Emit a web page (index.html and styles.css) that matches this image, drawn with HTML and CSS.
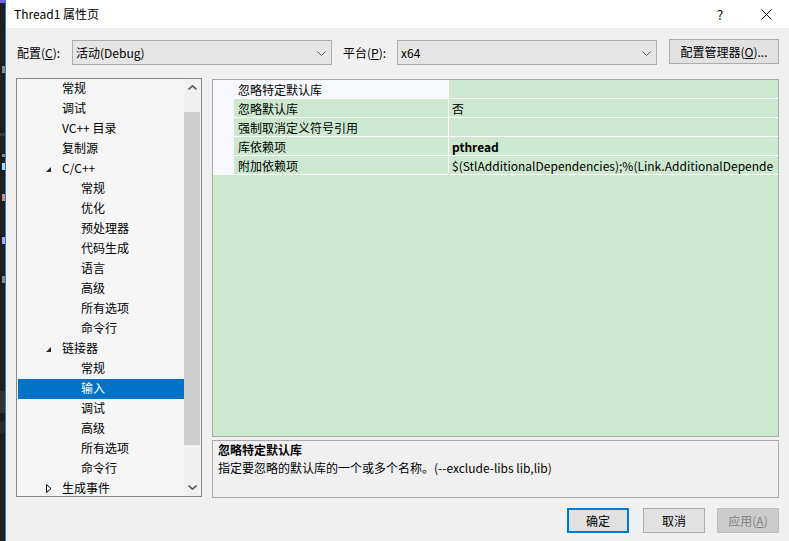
FILE: index.html
```html
<!DOCTYPE html>
<html lang="zh-CN">
<head>
    <meta charset="UTF-8">
    <meta name="viewport" content="width=device-width, initial-scale=1.0">
    <title>Thread1 属性页</title>
    <link rel="stylesheet" href="styles.css">
</head>
<body>

    <div class="screen">
        <!-- Editor window peeking out behind the dialog -->
        <div class="editor-edge">
            <div class="accent"></div>
            <div class="gap" style="height: 63px"></div>
            <div class="mark grey"></div>
            <div class="gap" style="height: 60px"></div>
            <div class="band"></div>
            <div class="gap" style="height: 18px"></div>
            <div class="mark grey short"></div>
            <div class="gap" style="height: 6px"></div>
            <div class="mark blue"></div>
            <div class="gap" style="height: 24px"></div>
            <div class="mark orange"></div>
            <div class="gap" style="height: 36px"></div>
            <div class="mark purple"></div>
            <div class="gap" style="height: 32px"></div>
            <div class="mark grey"></div>
            <div class="gap" style="height: 108px"></div>
            <div class="band tall"></div>
            <div class="gap" style="height: 8px"></div>
            <div class="band thin"></div>
        </div>

        <div class="dialog">
            <div class="titlebar">
                <span class="title">Thread1 属性页</span>
                <span class="help">?</span>
                <span class="close">
                    <svg width="11" height="11" viewBox="0 0 11 11">
                        <path d="M0.5 0.5 L10.5 10.5 M10.5 0.5 L0.5 10.5" stroke="#000" stroke-width="1" fill="none"/>
                    </svg>
                </span>
            </div>

            <div class="content">
                <!-- Configuration / platform selectors -->
                <div class="config-row">
                    <span class="field-label">配置(<u>C</u>):</span>
                    <div class="combo">
                        <span>活动(Debug)</span>
                        <svg class="chevron" width="9" height="5" viewBox="0 0 9 5">
                            <path d="M0.5 0.5 L4.5 4.5 L8.5 0.5" stroke="#555" fill="none"/>
                        </svg>
                    </div>
                    <span class="field-label platform">平台(<u>P</u>):</span>
                    <div class="combo">
                        <span>x64</span>
                        <svg class="chevron" width="9" height="5" viewBox="0 0 9 5">
                            <path d="M0.5 0.5 L4.5 4.5 L8.5 0.5" stroke="#555" fill="none"/>
                        </svg>
                    </div>
                    <button class="btn manager">配置管理器(<u>O</u>)...</button>
                </div>

                <div class="main">
                    <!-- Property page tree -->
                    <div class="tree">
                        <ul class="tree-list">
                            <li class="lvl0">常规</li>
                            <li class="lvl0">调试</li>
                            <li class="lvl0">VC++ 目录</li>
                            <li class="lvl0">复制源</li>
                            <li class="lvl0"><span class="twisty open"></span>C/C++</li>
                            <li class="lvl1">常规</li>
                            <li class="lvl1">优化</li>
                            <li class="lvl1">预处理器</li>
                            <li class="lvl1">代码生成</li>
                            <li class="lvl1">语言</li>
                            <li class="lvl1">高级</li>
                            <li class="lvl1">所有选项</li>
                            <li class="lvl1">命令行</li>
                            <li class="lvl0"><span class="twisty open"></span>链接器</li>
                            <li class="lvl1">常规</li>
                            <li class="lvl1 selected">输入</li>
                            <li class="lvl1">调试</li>
                            <li class="lvl1">高级</li>
                            <li class="lvl1">所有选项</li>
                            <li class="lvl1">命令行</li>
                            <li class="lvl0">
                                <span class="twisty closed">
                                    <svg width="6" height="9" viewBox="0 0 6 9">
                                        <path d="M0.5 0.5 L5 4.5 L0.5 8.5 Z" stroke="#000" fill="none"/>
                                    </svg>
                                </span>生成事件
                            </li>
                        </ul>
                        <div class="scrollbar">
                            <div class="sb-arrow">
                                <svg width="9" height="5" viewBox="0 0 9 5">
                                    <path d="M0.5 4.5 L4.5 0.8 L8.5 4.5" stroke="#606060" stroke-width="1.6" fill="none"/>
                                </svg>
                            </div>
                            <div class="sb-track">
                                <div class="sb-thumb"></div>
                            </div>
                            <div class="sb-arrow">
                                <svg width="9" height="5" viewBox="0 0 9 5">
                                    <path d="M0.5 0.5 L4.5 4.2 L8.5 0.5" stroke="#606060" stroke-width="1.6" fill="none"/>
                                </svg>
                            </div>
                        </div>
                    </div>

                    <div class="right">
                        <!-- Property grid -->
                        <div class="grid">
                            <div class="prop active">
                                <div class="prop-name">忽略特定默认库</div>
                                <div class="prop-value"></div>
                            </div>
                            <div class="prop">
                                <div class="prop-name">忽略默认库</div>
                                <div class="prop-value">否</div>
                            </div>
                            <div class="prop">
                                <div class="prop-name">强制取消定义符号引用</div>
                                <div class="prop-value"></div>
                            </div>
                            <div class="prop">
                                <div class="prop-name">库依赖项</div>
                                <div class="prop-value bold">pthread</div>
                            </div>
                            <div class="prop">
                                <div class="prop-name">附加依赖项</div>
                                <div class="prop-value">$(StlAdditionalDependencies);%(Link.AdditionalDepende</div>
                            </div>
                        </div>

                        <!-- Description of the selected property -->
                        <div class="desc">
                            <div class="desc-title">忽略特定默认库</div>
                            <div class="desc-text">指定要忽略的默认库的一个或多个名称。(--exclude-libs lib,lib)</div>
                        </div>
                    </div>
                </div>

                <div class="buttons">
                    <button class="btn default">确定</button>
                    <button class="btn">取消</button>
                    <button class="btn disabled">应用(<u>A</u>)</button>
                </div>
            </div>
        </div>
    </div>

</body>
</html>
```

FILE: styles.css
```css
/* General Styles */
body {
    margin: 0;
    padding: 0;
    font-family: "Segoe UI", "Noto Sans CJK SC", sans-serif;
    font-size: 12px;
    color: #000;
    background-color: #1e1e1e;
    overflow: hidden;
}

.screen {
    display: flex;
    width: 789px;
    height: 541px;
}

/* Editor strip on the left */
.editor-edge {
    width: 5px;
    flex-shrink: 0;
    background-color: #1e1e1e;
    overflow: hidden;
    display: flex;
    flex-direction: column;
    align-items: flex-end;
}

.editor-edge .gap {
    width: 5px;
}

.editor-edge .accent {
    width: 5px;
    height: 3px;
    background-color: #7160e8;
}

.editor-edge .band {
    width: 5px;
    height: 3px;
    background-color: #3a3a3a;
}

.editor-edge .band.tall {
    height: 22px;
    background-color: #333;
}

.editor-edge .band.thin {
    height: 12px;
    background-color: #2a2a2a;
}

.editor-edge .mark {
    width: 3px;
    height: 7px;
}

.editor-edge .mark.short {
    height: 3px;
}

.grey { background-color: #8a8a8a; }
.blue { background-color: #9cdcfe; }
.orange { background-color: #ce9178; }
.purple { background-color: #b4a7f0; }

/* Dialog */
.dialog {
    flex: 1;
    min-width: 0;
    display: flex;
    flex-direction: column;
    border-left: 1px solid #2b7bd0;
    background-color: #f0f0f0;
}

.titlebar {
    height: 28px;
    display: flex;
    align-items: center;
    background-color: #fff;
    padding-left: 8px;
}

.title {
    flex: 1;
    line-height: 16px;
}

.help {
    width: 46px;
    text-align: center;
    font-size: 13px;
}

.close {
    width: 46px;
    display: flex;
    justify-content: center;
}

.content {
    flex: 1;
    min-width: 0;
    padding: 12px 10px 0 10px;
    display: flex;
    flex-direction: column;
}

/* Config row */
.config-row {
    display: flex;
    align-items: center;
    height: 25px;
}

.field-label {
    width: 55px;
    padding-left: 1px;
    flex-shrink: 0;
}

.field-label.platform {
    width: 54px;
    margin-left: 10px;
}

.combo {
    width: 260px;
    height: 25px;
    box-sizing: border-box;
    flex-shrink: 0;
    border: 1px solid #acacac;
    background-color: #e5e5e5;
    display: flex;
    align-items: center;
    justify-content: space-between;
    padding: 0 5px 0 3px;
}

.chevron {
    margin-top: 1px;
}

.btn {
    font-family: inherit;
    font-size: 12px;
    color: #000;
    background-color: #e1e1e1;
    border: 1px solid #adadad;
    height: 25px;
    padding: 0;
    box-sizing: border-box;
}

.btn u, .field-label u {
    text-decoration: underline;
}

.manager {
    width: 110px;
    margin-left: 12px;
    margin-top: -2px;
    flex-shrink: 0;
}

/* Main area */
.main {
    display: flex;
    margin-top: 13px;
    gap: 10px;
}

.tree {
    width: 186px;
    height: 419px;
    box-sizing: border-box;
    flex-shrink: 0;
    border: 1px solid #828790;
    background-color: #f5f5f5;
    display: flex;
    overflow: hidden;
}

.tree-list {
    list-style: none;
    margin: 0;
    padding: 0 0 0 1px;
    flex: 1;
}

.tree-list li {
    height: 20px;
    line-height: 18px;
    padding-bottom: 2px;
    box-sizing: border-box;
    display: flex;
    align-items: center;
    white-space: nowrap;
}

.tree-list .lvl0 {
    padding-left: 44px;
}

.tree-list .lvl1 {
    padding-left: 63px;
}

.tree-list .selected {
    background-color: #0071c6;
    color: #fff;
}

.twisty {
    width: 6px;
    height: 9px;
    margin-left: -16px;
    margin-right: 10px;
    display: flex;
    align-items: center;
}

.twisty.open::before {
    content: "";
    display: block;
    width: 0;
    height: 0;
    border-left: 5px solid transparent;
    border-bottom: 5px solid #262626;
    margin-top: 2px;
}

.scrollbar {
    width: 17px;
    background-color: #f0f0f0;
    display: flex;
    flex-direction: column;
}

.sb-arrow {
    height: 17px;
    display: flex;
    align-items: center;
    justify-content: center;
}

.sb-track {
    flex: 1;
}

.sb-thumb {
    margin-top: 16px;
    height: 333px;
    width: 16px;
    background-color: #cdcdcd;
}

.right {
    flex: 1;
    min-width: 0;
    display: flex;
    flex-direction: column;
}

.grid {
    height: 358px;
    box-sizing: border-box;
    margin-top: 1px;
    border: 1px solid #a9a9a9;
    background-color: #cce8cf;
    overflow: hidden;
}

.prop {
    display: flex;
    height: 19px;
    box-sizing: border-box;
    border-bottom: 1px solid #fff;
    margin-left: 21px;
}

.prop::before {
    content: "";
    width: 21px;
    height: 19px;
    margin-left: -21px;
    background-color: #f6f8fb;
    flex-shrink: 0;
}

.prop-name {
    width: 210px;
    flex-shrink: 0;
    padding-left: 4px;
    line-height: 20px;
    height: 18px;
    overflow: hidden;
    border-right: 1px solid #fff;
    white-space: nowrap;
}

.prop.active .prop-name {
    background-color: #f6f8fc;
}

.prop-value {
    flex: 1;
    min-width: 0;
    padding-left: 3px;
    line-height: 20px;
    height: 18px;
    white-space: nowrap;
    overflow: hidden;
}

.prop-value.bold {
    font-weight: bold;
}

.desc {
    margin-top: 3px;
    height: 58px;
    box-sizing: border-box;
    border: 1px solid #a9a9a9;
    padding: 0 5px;
}

.desc-title {
    font-weight: bold;
    line-height: 18px;
}

.desc-text {
    line-height: 17px;
}

/* Dialog buttons */
.buttons {
    display: flex;
    justify-content: flex-end;
    gap: 12px;
    margin-top: 10px;
}

.buttons .btn {
    width: 62px;
    height: 25px;
}

.btn.default {
    border: 2px solid #0078d7;
    margin-right: 2px;
}

.btn.disabled {
    background-color: #cccccc;
    border-color: #bfbfbf;
    color: #838383;
}
```
